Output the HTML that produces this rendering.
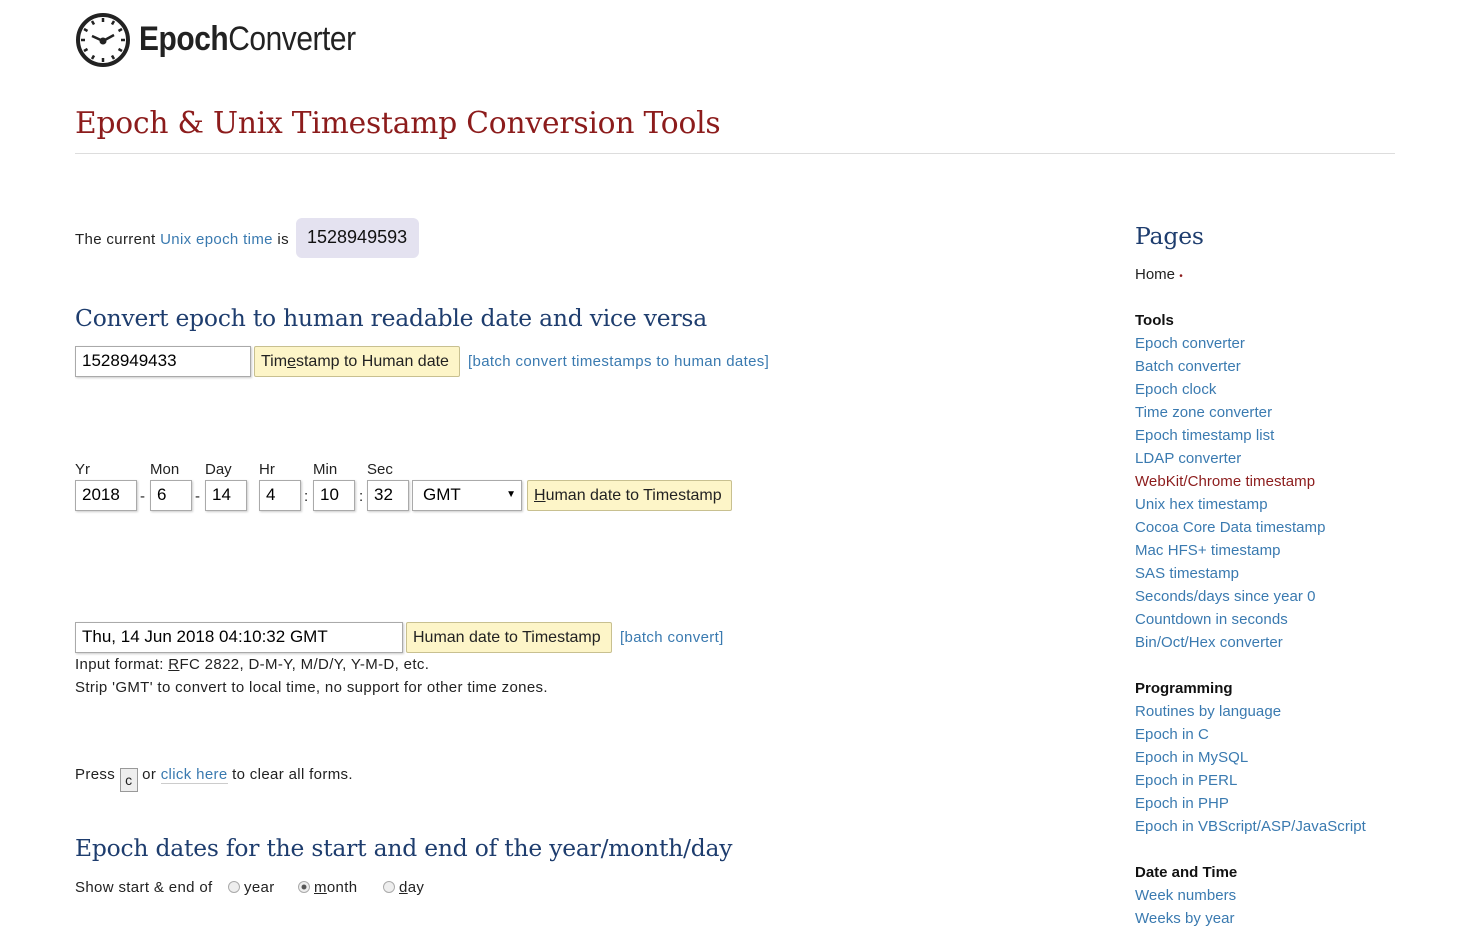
<!DOCTYPE html>
<html><head><meta charset="utf-8"><style>
*{margin:0;padding:0;box-sizing:border-box}
body{width:1471px;height:921px;overflow:hidden;background:#fff;font-family:"Liberation Sans",sans-serif;color:#222;position:relative;font-size:15px}
.a{position:absolute;white-space:nowrap}
.m{letter-spacing:0.35px}
a{color:#3a7ab0;text-decoration:none}
.h{font-family:"DejaVu Serif","Liberation Serif",serif;color:#1e3d6e;font-size:23.4px;letter-spacing:-0.2px}
.inp{position:absolute;border:1px solid #aaa;background:#fff;height:31px;font-size:17px;padding:4px 6px;box-shadow:1px 1px 2px #ccc;font-family:"Liberation Sans",sans-serif;color:#000}
.btn{position:absolute;border:1px solid #c8c090;background:#fdf5c8;height:31px;font-size:16px;padding:6px 6px 0;border-radius:2px;color:#222}
.lbl{position:absolute;font-size:15px;top:461px}
.side a{display:block;height:23px;font-size:15px;letter-spacing:0.05px}
.side b{display:block;font-size:15px;color:#111;height:23px}
.r{position:absolute;width:12px;height:12px;border:1px solid #aaa;border-radius:50%;background:#eee;top:881px}
</style></head><body>
<svg class="a" style="left:75px;top:12px" width="56" height="56" viewBox="0 0 56 56">
<circle cx="28" cy="28" r="25" fill="none" stroke="#222" stroke-width="4"/>
<g stroke="#222" stroke-width="2.5">
<line x1="28" y1="6" x2="28" y2="10"/><line x1="28" y1="46" x2="28" y2="50"/><line x1="6" y1="28" x2="10" y2="28"/><line x1="46" y1="28" x2="50" y2="28"/>
<line x1="39" y1="9" x2="37" y2="12.5"/><line x1="17" y1="9" x2="19" y2="12.5"/><line x1="39" y1="47" x2="37" y2="43.5"/><line x1="17" y1="47" x2="19" y2="43.5"/>
<line x1="9" y1="17" x2="12.5" y2="19"/><line x1="47" y1="17" x2="43.5" y2="19"/><line x1="9" y1="39" x2="12.5" y2="37"/><line x1="47" y1="39" x2="43.5" y2="37"/>
<line x1="17" y1="24" x2="28" y2="29"/><line x1="39" y1="23" x2="28" y2="29"/></g>
<circle cx="28" cy="29" r="3.5" fill="#222"/></svg>
<div class="a" style="left:139px;top:20px;font-size:34px;color:#222;letter-spacing:-0.5px;transform:scaleX(0.88);transform-origin:left top"><b>Epoch</b>Converter</div>
<div class="a" style="left:75px;top:106px;font-family:'DejaVu Serif','Liberation Serif',serif;font-size:29.7px;color:#8c1c1c;letter-spacing:-0.2px">Epoch &amp; Unix Timestamp Conversion Tools</div>
<div class="a" style="left:75px;top:153px;width:1320px;border-top:1px solid #ddd"></div>

<div class="a m" style="left:75px;top:231px">The current <a>Unix epoch time</a> is</div>
<div class="a" style="left:296px;top:218px;width:123px;height:40px;background:#e4e2f0;border-radius:6px;font-size:18px;padding:9px 11px;color:#111">1528949593</div>

<div class="a h" style="left:75px;top:304px">Convert epoch to human readable date and vice versa</div>
<div class="inp" style="left:75px;top:346px;width:176px">1528949433</div>
<div class="btn" style="left:254px;top:346px;width:206px">Tim<u>e</u>stamp to Human date</div>
<a class="a m" style="left:468px;top:353px">[batch convert timestamps to human dates]</a>

<div class="lbl" style="left:75px">Yr</div>
<div class="lbl" style="left:150px">Mon</div>
<div class="lbl" style="left:205px">Day</div>
<div class="lbl" style="left:259px">Hr</div>
<div class="lbl" style="left:313px">Min</div>
<div class="lbl" style="left:367px">Sec</div>
<div class="inp" style="left:75px;top:480px;width:62px">2018</div>
<div class="lbl" style="left:140px;top:488px">-</div>
<div class="inp" style="left:150px;top:480px;width:42px">6</div>
<div class="lbl" style="left:195px;top:488px">-</div>
<div class="inp" style="left:205px;top:480px;width:42px">14</div>
<div class="inp" style="left:259px;top:480px;width:42px">4</div>
<div class="lbl" style="left:304px;top:488px">:</div>
<div class="inp" style="left:313px;top:480px;width:42px">10</div>
<div class="lbl" style="left:359px;top:488px">:</div>
<div class="inp" style="left:367px;top:480px;width:42px">32</div>
<div class="inp" style="left:412px;top:480px;width:110px;padding-left:10px">GMT<span style="position:absolute;right:5px;top:8px;font-size:10px">▼</span></div>
<div class="btn" style="left:527px;top:480px;width:205px"><u>H</u>uman date to Timestamp</div>

<div class="inp" style="left:75px;top:622px;width:328px">Thu, 14 Jun 2018 04:10:32 GMT</div>
<div class="btn" style="left:406px;top:622px;width:206px">Human date to Timestamp</div>
<a class="a m" style="left:620px;top:629px">[batch convert]</a>
<div class="a m" style="left:75px;top:656px">Input format: <u>R</u>FC 2822, D-M-Y, M/D/Y, Y-M-D, etc.</div>
<div class="a m" style="left:75px;top:679px">Strip 'GMT' to convert to local time, no support for other time zones.</div>
<div class="a m" style="left:75px;top:766px">Press <span style="display:inline-block;border:1px solid #999;background:#eee;width:18px;height:24px;text-align:center;line-height:22px;font-size:14px;vertical-align:-6px;letter-spacing:0">c</span> or <a style="border-bottom:1px solid #ccc">click here</a> to clear all forms.</div>

<div class="a h" style="left:75px;top:834px">Epoch dates for the start and end of the year/month/day</div>
<div class="a m" style="left:75px;top:879px">Show start &amp; end of</div>
<span class="r" style="left:228px"></span><div class="a m" style="left:244px;top:879px">year</div>
<span class="r" style="left:298px;background:radial-gradient(#555 30%,#eee 40%)"></span><div class="a m" style="left:314px;top:879px"><u>m</u>onth</div>
<span class="r" style="left:383px"></span><div class="a m" style="left:399px;top:879px"><u>d</u>ay</div>

<div class="a h" style="left:1135px;top:222px;font-size:23.5px">Pages</div>
<div class="a" style="left:1135px;top:266px;color:#222">Home <span style="color:#8c1c1c;font-size:10px">•</span></div>
<div class="a side" style="left:1135px;top:312px">
<b>Tools</b>
<a>Epoch converter</a><a>Batch converter</a><a>Epoch clock</a><a>Time zone converter</a><a>Epoch timestamp list</a><a>LDAP converter</a><a style="color:#8c1c1c">WebKit/Chrome timestamp</a><a>Unix hex timestamp</a><a>Cocoa Core Data timestamp</a><a>Mac HFS+ timestamp</a><a>SAS timestamp</a><a>Seconds/days since year 0</a><a>Countdown in seconds</a><a>Bin/Oct/Hex converter</a>
<div style="height:23px"></div>
<b>Programming</b>
<a>Routines by language</a><a>Epoch in C</a><a>Epoch in MySQL</a><a>Epoch in PERL</a><a>Epoch in PHP</a><a>Epoch in VBScript/ASP/JavaScript</a>
<div style="height:23px"></div>
<b>Date and Time</b>
<a>Week numbers</a><a>Weeks by year</a>
</div>
</body></html>
